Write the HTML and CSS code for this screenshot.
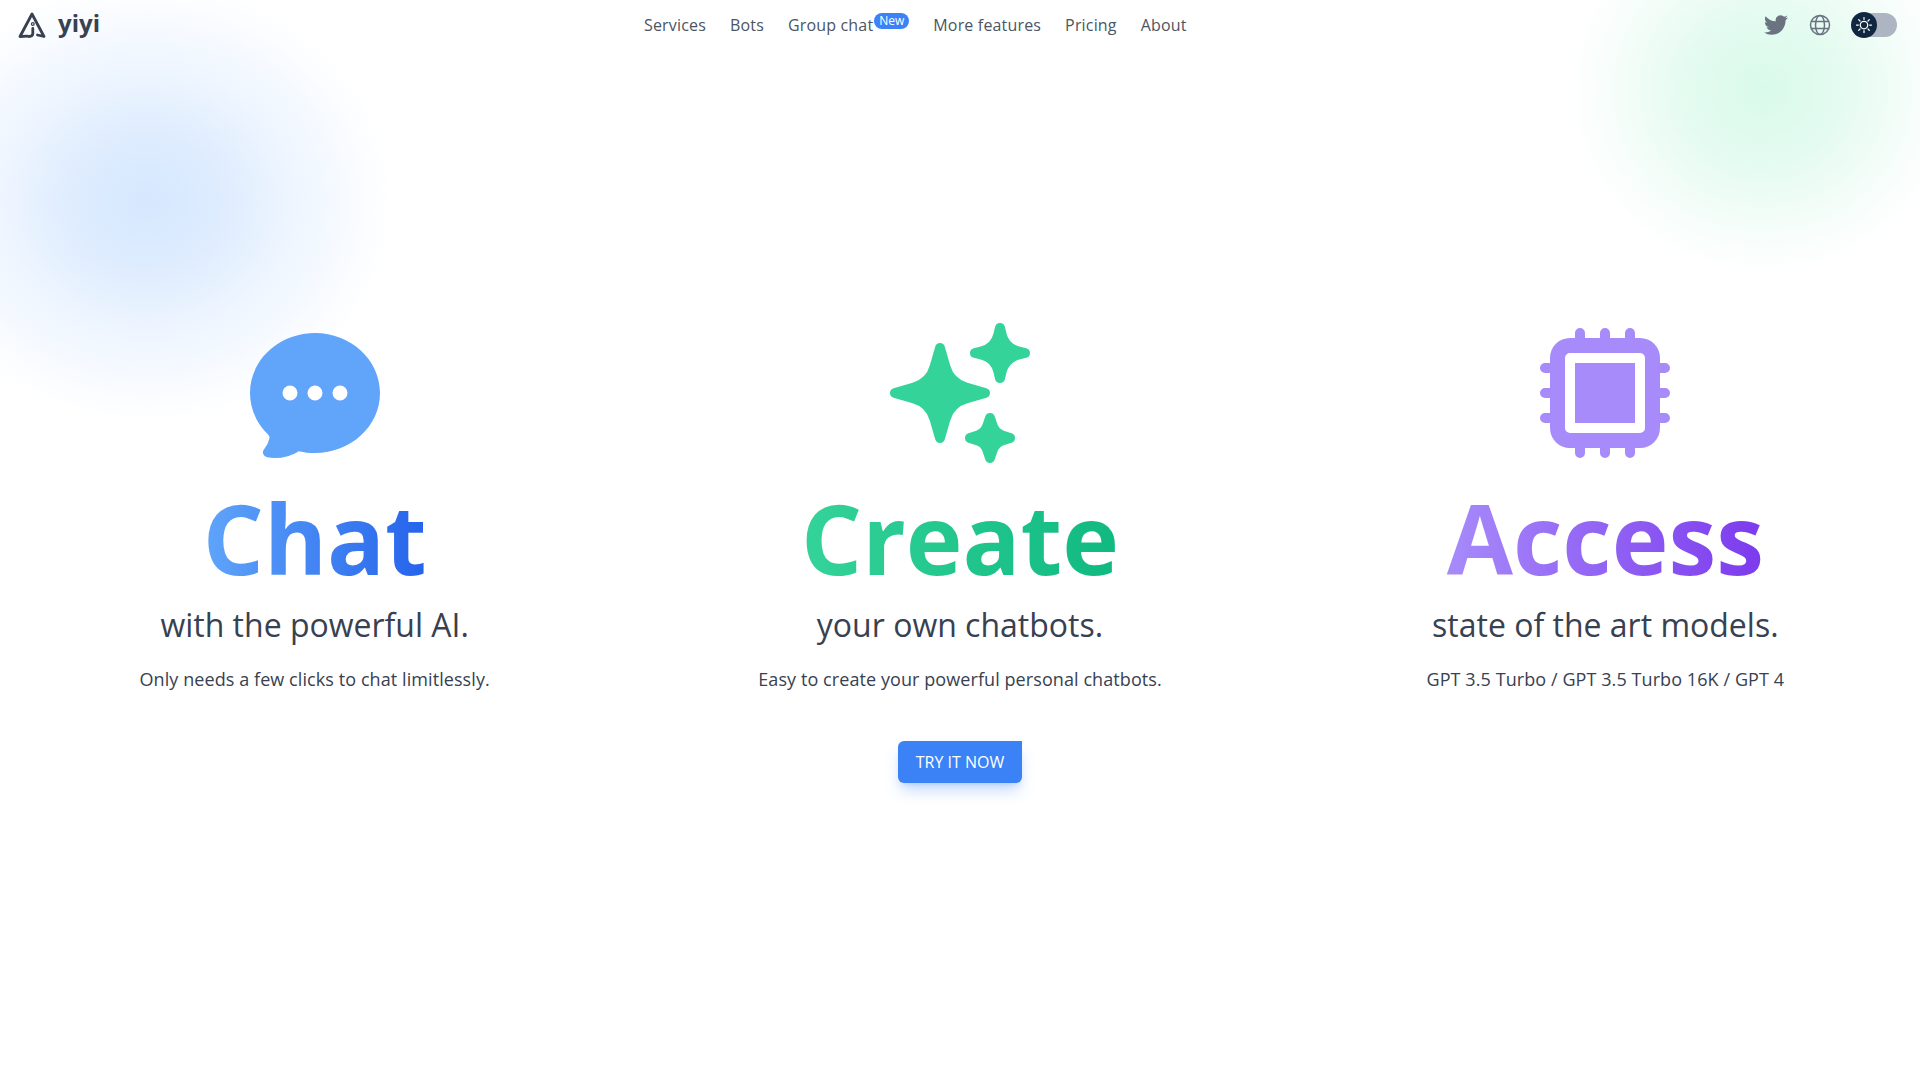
FILE: index.html
```
<!DOCTYPE html>
<html lang="en">
<head>
    <meta charset="UTF-8">
    <meta name="viewport" content="width=device-width, initial-scale=1.0">
    <title>yiyi</title>
    <link rel="stylesheet" href="styles.css">
</head>
<body>
    <div class="blob blob-blue"></div>
    <div class="blob blob-green"></div>

    <header class="header">
        <a class="logo" href="#">
            <svg class="logo-mark" viewBox="0 0 28 28" fill="none" stroke="#374151" stroke-width="2.800" stroke-linecap="round" stroke-linejoin="round">
                <path d="M9.500 25.200l-7.500.300L14 3l12 22.500-6.500-1.500"/>
                <path d="M14.800 17.500v5q0 2.800-4 3"/>
                <circle cx="14.800" cy="13" r="0.600"/>
            </svg>
            <span class="logo-text">yiyi</span>
        </a>

        <nav class="nav">
            <a href="#">Services</a>
            <a href="#">Bots</a>
            <a href="#" class="nav-badged">Group chat<span class="badge">New</span></a>
            <a href="#">More features</a>
            <a href="#">Pricing</a>
            <a href="#">About</a>
        </nav>

        <div class="header-tools">
            <a href="#" class="tool">
                <svg viewBox="0 0 24 24" fill="#6b7280"><path d="M23.950 4.570a10 10 0 0 1-2.820.770 4.960 4.960 0 0 0 2.160-2.720c-.950.550-2 .950-3.130 1.180a4.920 4.920 0 0 0-8.380 4.480A13.960 13.960 0 0 1 1.640 3.160a4.820 4.820 0 0 0-.670 2.480c0 1.710.870 3.210 2.190 4.100a4.900 4.900 0 0 1-2.230-.620v.060a4.920 4.920 0 0 0 3.950 4.830 5 5 0 0 1-2.210.080 4.940 4.940 0 0 0 4.600 3.420A9.870 9.870 0 0 1 0 19.540a14 14 0 0 0 7.560 2.210c9.050 0 14-7.500 14-13.980 0-.210 0-.420-.020-.630a9.940 9.940 0 0 0 2.410-2.570z"/></svg>
            </a>
            <a href="#" class="tool">
                <svg viewBox="0 0 24 24" fill="none" stroke="#6b7280" stroke-width="1.500"><circle cx="12" cy="12" r="9.500"/><ellipse cx="12" cy="12" rx="4.500" ry="9.500"/><path d="M3.300 8.500h17.400M3.300 15.500h17.400"/></svg>
            </a>
            <div class="toggle">
                <span class="toggle-knob">
                    <svg viewBox="0 0 24 24" fill="none" stroke="#fff" stroke-width="1.500" stroke-linecap="round"><circle cx="12" cy="12" r="4.500"/><path d="M12 3v2.200M12 18.800V21M3 12h2.200M18.800 12H21M5.600 5.600l1.600 1.600M16.800 16.800l1.600 1.600M5.600 18.400l1.600-1.600M16.800 7.200l1.600-1.600"/></svg>
                </span>
            </div>
        </div>
    </header>

    <main class="hero">
        <div class="columns">
            <section class="column">
                <svg class="column-icon icon-blue" viewBox="0 0 24 24" fill="currentColor"><path fill-rule="evenodd" clip-rule="evenodd" d="M4.804 21.644A6.707 6.707 0 006 21.750a6.721 6.721 0 003.583-1.029c.774.182 1.584.279 2.417.279 5.322 0 9.750-3.970 9.750-9 0-5.030-4.428-9-9.750-9s-9.750 3.970-9.750 9c0 2.409 1.025 4.587 2.674 6.192.232.226.277.428.254.543a3.730 3.730 0 01-.814 1.686.750.750 0 00.440 1.223zM8.250 10.875a1.125 1.125 0 100 2.250 1.125 1.125 0 000-2.250zM10.875 12a1.125 1.125 0 112.250 0 1.125 1.125 0 01-2.250 0zm4.875-1.125a1.125 1.125 0 100 2.250 1.125 1.125 0 000-2.250z"/></svg>
                <h1 class="column-title title-blue">Chat</h1>
                <h2 class="column-sub">with the powerful AI.</h2>
                <p class="column-text">Only needs a few clicks to chat limitlessly.</p>
            </section>
            <section class="column">
                <svg class="column-icon icon-green" viewBox="0 0 24 24" fill="currentColor"><path fill-rule="evenodd" clip-rule="evenodd" d="M9 4.500a.750.750 0 01.721.544l.813 2.846a3.750 3.750 0 002.576 2.576l2.846.813a.750.750 0 010 1.442l-2.846.813a3.750 3.750 0 00-2.576 2.576l-.813 2.846a.750.750 0 01-1.442 0l-.813-2.846a3.750 3.750 0 00-2.576-2.576l-2.846-.813a.750.750 0 010-1.442l2.846-.813A3.750 3.750 0 007.466 7.890l.813-2.846A.750.750 0 019 4.500zM18 1.500a.750.750 0 01.728.568l.258 1.036c.236.940.970 1.674 1.910 1.910l1.036.258a.750.750 0 010 1.456l-1.036.258c-.940.236-1.674.970-1.910 1.910l-.258 1.036a.750.750 0 01-1.456 0l-.258-1.036a2.625 2.625 0 00-1.910-1.910l-1.036-.258a.750.750 0 010-1.456l1.036-.258a2.625 2.625 0 001.910-1.910l.258-1.036A.750.750 0 0118 1.500zM16.500 15a.750.750 0 01.712.513l.394 1.183c.150.447.500.799.948.948l1.183.395a.750.750 0 010 1.422l-1.183.395c-.447.150-.799.500-.948.948l-.395 1.183a.750.750 0 01-1.422 0l-.395-1.183a1.500 1.500 0 00-.948-.948l-1.183-.395a.750.750 0 010-1.422l1.183-.395c.447-.150.799-.500.948-.948l.395-1.183A.750.750 0 0116.500 15z"/></svg>
                <h1 class="column-title title-green">Create</h1>
                <h2 class="column-sub">your own chatbots.</h2>
                <p class="column-text">Easy to create your powerful personal chatbots.</p>
            </section>
            <section class="column">
                <svg class="column-icon icon-violet" viewBox="0 0 24 24" fill="currentColor"><path d="M16.500 7.500h-9v9h9v-9z"/><path fill-rule="evenodd" clip-rule="evenodd" d="M8.250 2.250A.750.750 0 019 3v.750h2.250V3a.750.750 0 011.500 0v.750H15V3a.750.750 0 011.500 0v.750h.750a3 3 0 013 3v.750H21A.750.750 0 0121 9h-.750v2.250H21a.750.750 0 010 1.500h-.750V15H21a.750.750 0 010 1.500h-.750v.750a3 3 0 01-3 3h-.750V21a.750.750 0 01-1.500 0v-.750h-2.250V21a.750.750 0 01-1.500 0v-.750H9V21a.750.750 0 01-1.500 0v-.750h-.750a3 3 0 01-3-3v-.750H3A.750.750 0 013 15h.750v-2.250H3a.750.750 0 010-1.500h.750V9H3a.750.750 0 010-1.500h.750v-.750a3 3 0 013-3h.750V3a.750.750 0 01.750-.750zM6 6.750A.750.750 0 016.750 6h10.500a.750.750 0 01.750.750v10.500a.750.750 0 01-.750.750H6.750a.750.750 0 01-.750-.750V6.750z"/></svg>
                <h1 class="column-title title-violet">Access</h1>
                <h2 class="column-sub">state of the art models.</h2>
                <p class="column-text">GPT 3.5 Turbo / GPT 3.5 Turbo 16K / GPT 4</p>
            </section>
        </div>
        <a href="#" class="try-btn">TRY IT NOW</a>
    </main>
</body>
</html>
```

FILE: styles.css
```
* {
    box-sizing: border-box;
}
html, body {
    margin: 0;
    height: 100%;
}
body {
    position: relative;
    overflow: hidden;
    background: #fff;
    color: #374151;
    font-family: "Open Sans", "Noto Sans", sans-serif;
}
a {
    color: inherit;
    text-decoration: none;
}
h1, h2, p {
    margin: 0;
}

/* background glows */
.blob {
    position: absolute;
    border-radius: 50%;
    pointer-events: none;
}
.blob-blue {
    left: -98px;
    top: -18px;
    width: 490px;
    height: 440px;
    background: radial-gradient(closest-side, #d6e8fe 0%, #deecfe 30%, #eff6ff 62%, rgba(255,255,255,0) 100%);
}
.blob-green {
    left: 1568px;
    top: -96px;
    width: 390px;
    height: 370px;
    background: radial-gradient(closest-side, #d9faea 0%, #e4fbf0 40%, #f4fdf9 72%, rgba(255,255,255,0) 100%);
}

/* header */
.header {
    position: relative;
    display: flex;
    align-items: center;
    height: 50px;
    padding: 0 23px 0 18px;
}
.logo {
    display: flex;
    align-items: center;
    gap: 12px;
    width: 626px;
}
.logo-mark {
    width: 28px;
    height: 28px;
}
.logo-text {
    color: #374151;
    font-size: 24px;
    font-weight: 700;
    line-height: 28px;
    margin-top: -4px;
}
.nav {
    display: flex;
    gap: 24px;
    font-size: 16px;
    letter-spacing: 0.17px;
    color: #4b5563;
}
.nav-badged {
    position: relative;
    padding-right: 36px;
}
.badge {
    position: absolute;
    right: 0;
    top: -1px;
    height: 16px;
    padding: 0 5px;
    border-radius: 8px;
    background: #3b82f6;
    color: #fff;
    font-size: 12px;
    letter-spacing: 0;
    line-height: 15px;
}
.header-tools {
    display: flex;
    align-items: center;
    margin-left: auto;
}
.tool {
    display: flex;
    margin-right: 20px;
}
.tool svg {
    width: 24px;
    height: 24px;
}
.toggle {
    width: 45px;
    height: 24px;
    border-radius: 12px;
    background: #aeb5c2;
}
.toggle-knob {
    display: flex;
    align-items: center;
    justify-content: center;
    width: 26px;
    height: 26px;
    margin: -1px 0 0 -1px;
    border-radius: 50%;
    background: #0f2740;
}
.toggle-knob svg {
    width: 20px;
    height: 20px;
}

/* hero */
.hero {
    position: relative;
    display: flex;
    flex-direction: column;
    align-items: center;
    padding-top: 263px;
}
.columns {
    display: grid;
    grid-template-columns: repeat(3, 1fr);
    gap: 48px;
    width: 100%;
    padding: 0 16px;
}
.column {
    display: flex;
    flex-direction: column;
    align-items: center;
    text-align: center;
}
.column-icon {
    width: 160px;
    height: 160px;
}
.icon-blue { color: #60a5fa; }
.icon-green { color: #34d399; }
.icon-violet { color: #a78bfa; }

.column-title {
    font-size: 96px;
    font-weight: 700;
    line-height: 96px;
    margin-top: 17px;
    -webkit-background-clip: text;
    background-clip: text;
    color: transparent;
}
.title-blue { background-image: linear-gradient(to right, #60a5fa, #2563eb); }
.title-green { background-image: linear-gradient(to right, #34d399, #10b981); }
.title-violet { background-image: linear-gradient(to right, #a78bfa, #7c3aed); }

.column-sub {
    margin-top: 19px;
    font-size: 32px;
    font-weight: 400;
    line-height: 40px;
    color: #374151;
}
.column-text {
    margin-top: 20px;
    font-size: 18px;
    letter-spacing: 0.08px;
    line-height: 28px;
    color: #374151;
}
.try-btn {
    margin-top: 48px;
    width: 124px;
    height: 42px;
    border-radius: 6px 0 6px 6px;
    background: #3b82f6;
    box-shadow: 0 10px 15px -3px rgba(59,130,246,0.3), 0 4px 6px -4px rgba(59,130,246,0.3);
    color: #fff;
    font-size: 16px;
    line-height: 42px;
    text-align: center;
}
```
